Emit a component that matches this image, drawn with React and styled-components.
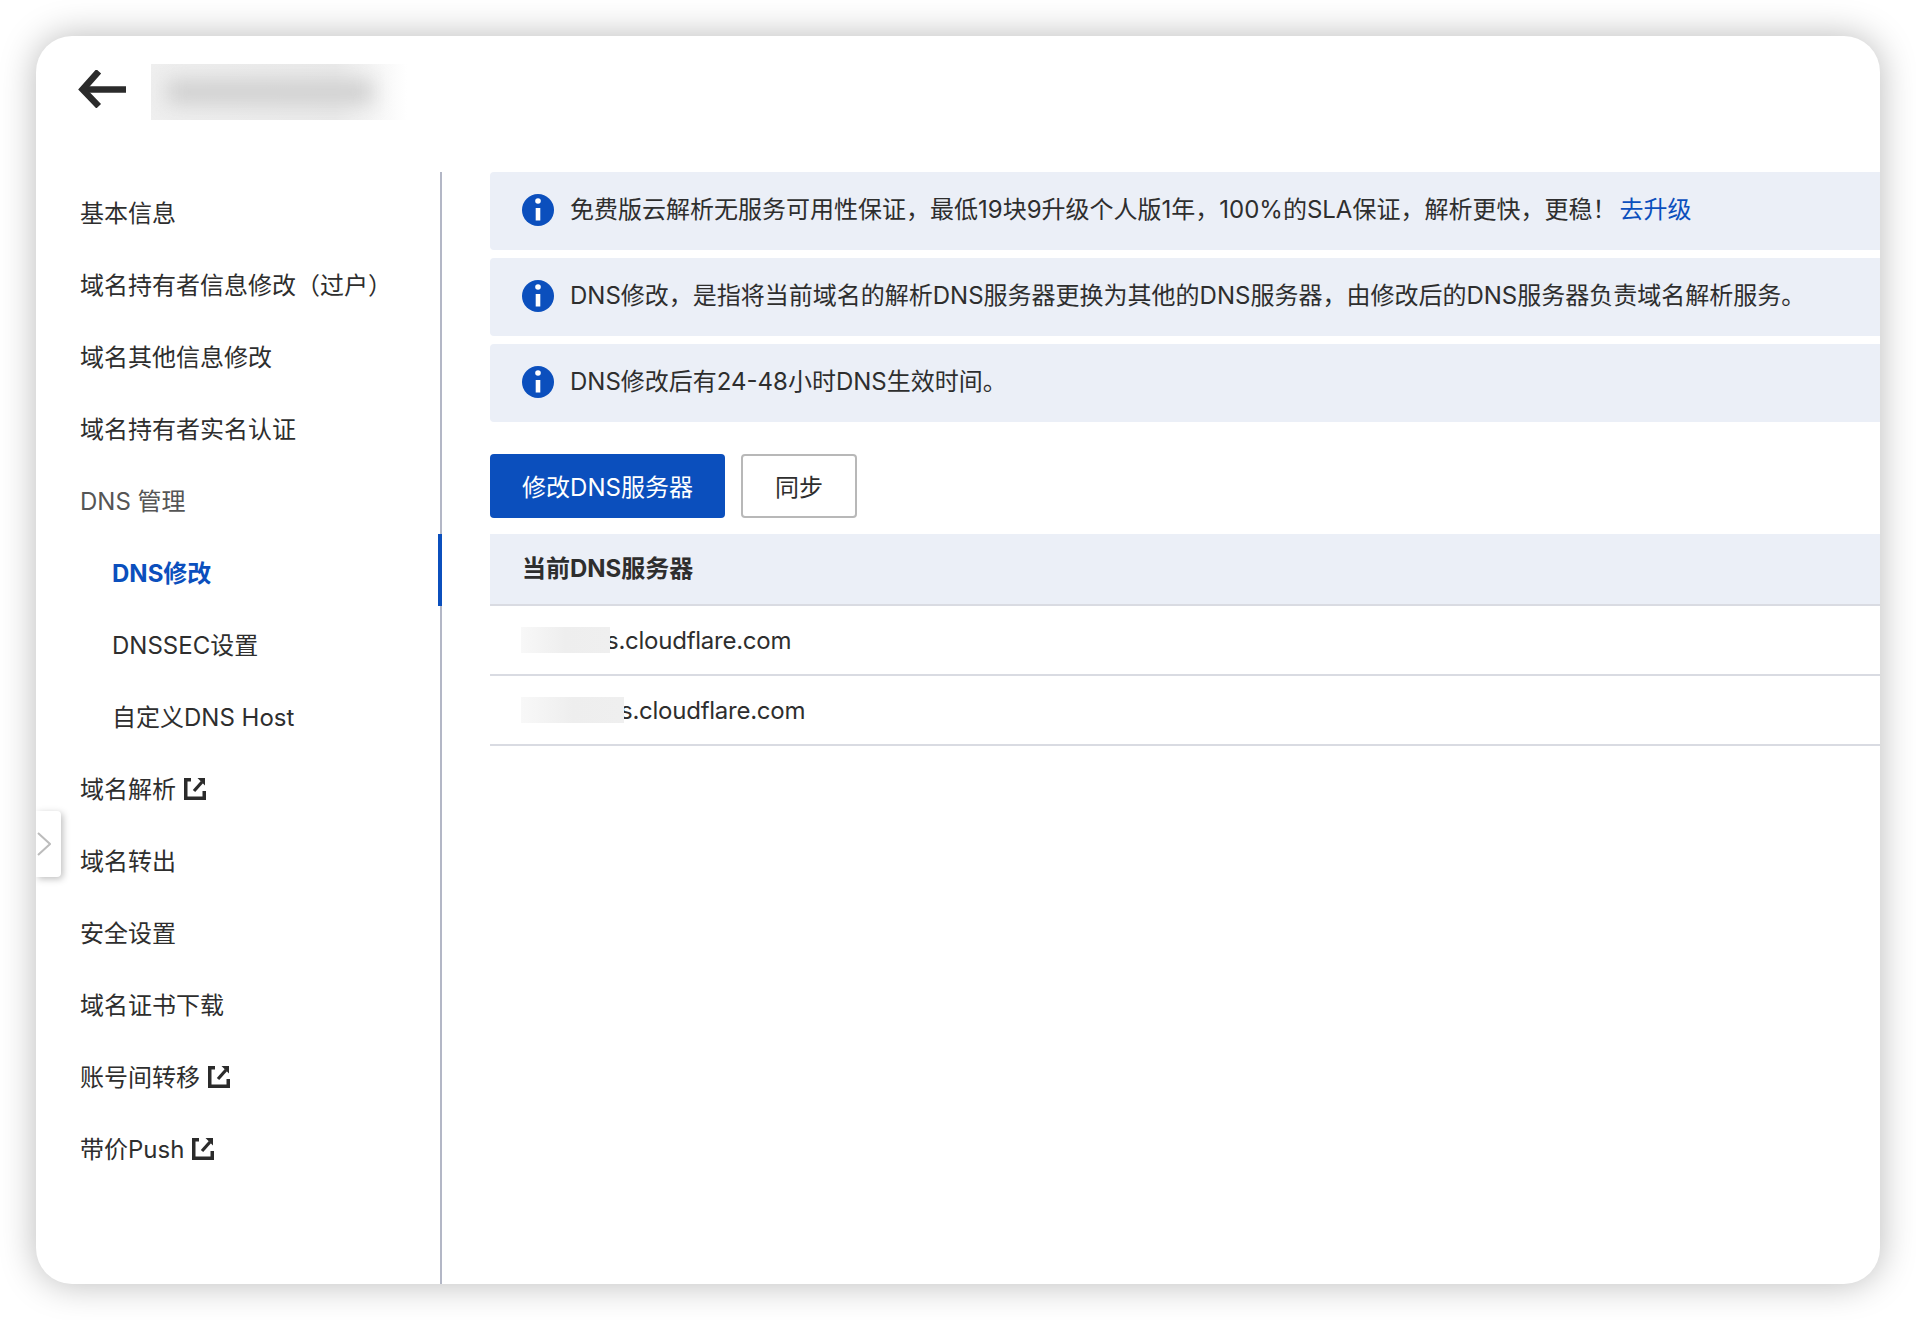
import styled, { createGlobalStyle } from "styled-components";

const GlobalStyle = createGlobalStyle`
    html, body {
        margin: 0;
        padding: 0;
        background: #fff;
    }
    body {
        font-family: Inter, "Noto Sans CJK SC", sans-serif;
        color: #2e2e2e;
    }
`;

const menu = [
    { label: "基本信息" },
    { label: "域名持有者信息修改（过户）" },
    { label: "域名其他信息修改" },
    { label: "域名持有者实名认证" },
    { label: "DNS 管理", muted: true },
    { label: "DNS修改", sub: true, active: true },
    { label: "DNSSEC设置", sub: true },
    { label: "自定义DNS Host", sub: true },
    { label: "域名解析", external: true },
    { label: "域名转出" },
    { label: "安全设置" },
    { label: "域名证书下载" },
    { label: "账号间转移", external: true },
    { label: "带价Push", external: true },
];

const ExternalIcon = () => (
    <ExternalSvg viewBox="0 0 22 22" fill="none" stroke="#2b2b2b">
        <path d="M7 1.75H1.75V20.25H20.25V13" strokeWidth="3.5" />
        <path d="M10 13L18 4" strokeWidth="3.2" />
        <path d="M13.5 0H21V7.5Z" fill="#2b2b2b" stroke="none" />
    </ExternalSvg>
);

const InfoIcon = () => (
    <InfoSvg viewBox="0 0 32 32">
        <circle cx="16" cy="16" r="16" fill="#0b4fbd" />
        <circle cx="16" cy="7" r="2.8" fill="#fff" />
        <rect x="13.7" y="14" width="4.6" height="12.5" fill="#fff" />
    </InfoSvg>
);

const App = () => {
    return (
        <>
            <GlobalStyle />
            <Card>
                <Header>
                    <BackArrow viewBox="0 0 48 38" fill="none" stroke="#2b2b2b" strokeWidth="6.5">
                        <path d="M48 19.5H5" />
                        <path d="M20.7 1.3L4.6 19.5L20.7 36.2" />
                    </BackArrow>
                    <TitleMask>
                        <TitleSmear />
                    </TitleMask>
                </Header>
                <Body>
                    <Sidebar>
                        {menu.map((item) => (
                            <MenuItem key={item.label} $sub={item.sub} $active={item.active} $muted={item.muted}>
                                {item.label}
                                {item.external && <ExternalIcon />}
                            </MenuItem>
                        ))}
                    </Sidebar>
                    <Main>
                        <Notice>
                            <InfoIcon />
                            <NoticeText>
                                免费版云解析无服务可用性保证，最低19块9升级个人版1年，100%的SLA保证，解析更快，更稳！
                                <UpgradeLink>去升级</UpgradeLink>
                            </NoticeText>
                        </Notice>
                        <Notice>
                            <InfoIcon />
                            <NoticeText>DNS修改，是指将当前域名的解析DNS服务器更换为其他的DNS服务器，由修改后的DNS服务器负责域名解析服务。</NoticeText>
                        </Notice>
                        <Notice>
                            <InfoIcon />
                            <NoticeText>DNS修改后有24-48小时DNS生效时间。</NoticeText>
                        </Notice>
                        <Actions>
                            <PrimaryButton>修改DNS服务器</PrimaryButton>
                            <PlainButton>同步</PlainButton>
                        </Actions>
                        <TableHead>当前DNS服务器</TableHead>
                        <TableRow>
                            <HostText $inset={84}>s.cloudflare.com</HostText>
                            <HostMask $width={89} />
                        </TableRow>
                        <TableRow>
                            <HostText $inset={98}>s.cloudflare.com</HostText>
                            <HostMask $width={103} />
                        </TableRow>
                    </Main>
                </Body>
                <CollapseHandle>
                    <svg width="14" height="24" viewBox="0 0 14 24" fill="none" stroke="#bcbcbc" strokeWidth="2">
                        <path d="M1 1L13 12L1 23" />
                    </svg>
                </CollapseHandle>
            </Card>
        </>
    );
};

export default App;

const Card = styled.div`
    position: relative;
    width: 1844px;
    height: 1248px;
    margin: 36px;
    background: #fff;
    border-radius: 36px;
    box-shadow: 0 0 36px rgba(0, 0, 0, 0.28);
    display: flex;
    flex-direction: column;
    overflow: hidden;
`;

const Header = styled.div`
    height: 136px;
    flex-shrink: 0;
    display: flex;
    align-items: flex-start;
    padding-left: 42px;
    box-sizing: border-box;
`;

const BackArrow = styled.svg`
    width: 48px;
    height: 38px;
    margin-top: 34px;
`;

const TitleMask = styled.div`
    width: 256px;
    height: 56px;
    margin: 28px 0 0 25px;
    background: linear-gradient(90deg, #efefef 0%, #eaeaea 72%, #ffffff 100%);
    overflow: hidden;
`;

const TitleSmear = styled.div`
    width: 206px;
    height: 24px;
    margin: 16px 0 0 16px;
    background: #cfcfcf;
    filter: blur(10px);
`;

const Body = styled.div`
    flex: 1;
    display: flex;
    min-height: 0;
`;

const Sidebar = styled.div`
    width: 406px;
    flex-shrink: 0;
    box-sizing: border-box;
    border-right: 2px solid #b3b7c6;
    padding-top: 2px;
`;

const MenuItem = styled.div`
    height: 72px;
    padding: 2px 0 0 ${(p) => (p.$sub ? "76px" : "44px")};
    box-sizing: border-box;
    display: flex;
    align-items: center;
    font-size: 24px;
    color: ${(p) => (p.$active ? "#0b4fbd" : p.$muted ? "#555" : "#2e2e2e")};
    font-weight: ${(p) => (p.$active ? 700 : 400)};
    border-right: ${(p) => (p.$active ? "4px solid #0b4fbd" : "none")};
    margin-right: -2px;
`;

const ExternalSvg = styled.svg`
    width: 22px;
    height: 22px;
    margin: 4px 0 0 8px;
`;

const Main = styled.div`
    flex: 1;
    min-width: 0;
    padding-left: 48px;
`;

const Notice = styled.div`
    height: 78px;
    margin-bottom: 8px;
    padding-left: 32px;
    display: flex;
    align-items: center;
    gap: 16px;
    background: #ebeff7;
    border-radius: 4px 0 0 4px;
    font-size: 24px;
    color: #2e2e2e;
`;

const NoticeText = styled.span`
    padding-bottom: 8px;
`;

const InfoSvg = styled.svg`
    width: 32px;
    height: 32px;
    flex-shrink: 0;
    margin-bottom: 2px;
`;

const UpgradeLink = styled.a`
    margin-left: 3px;
    color: #0b4fbd;
`;

const Actions = styled.div`
    display: flex;
    gap: 16px;
    margin: 32px 0 16px;
`;

const PrimaryButton = styled.button`
    height: 64px;
    width: 235px;
    padding: 0 0 2px;
    border: none;
    border-radius: 4px;
    background: #0b4fbd;
    color: #fff;
    font: inherit;
    font-size: 24px;
`;

const PlainButton = styled.button`
    height: 64px;
    width: 116px;
    padding: 0 0 2px;
    border: 2px solid #b8b8b8;
    border-radius: 4px;
    background: #fff;
    color: #2e2e2e;
    font: inherit;
    font-size: 24px;
`;

const TableHead = styled.div`
    height: 72px;
    box-sizing: border-box;
    padding: 0 0 6px 32px;
    display: flex;
    align-items: center;
    background: #ebeff7;
    border-bottom: 2px solid #d9dbe2;
    font-size: 24px;
    font-weight: 700;
`;

const TableRow = styled.div`
    position: relative;
    height: 70px;
    box-sizing: border-box;
    padding-left: 32px;
    display: flex;
    align-items: center;
    border-bottom: 2px solid #d9dbe2;
    font-size: 24px;
`;

const HostText = styled.span`
    padding-left: ${(p) => p.$inset}px;
    letter-spacing: -0.25px;
`;

const HostMask = styled.div`
    position: absolute;
    left: 31px;
    top: 21px;
    width: ${(p) => p.$width}px;
    height: 26px;
    background: linear-gradient(90deg, #f8f8f8 0%, #eeeeee 50%, #efefef 100%);
`;

const CollapseHandle = styled.div`
    position: absolute;
    left: 0;
    top: 775px;
    width: 25px;
    height: 66px;
    box-sizing: border-box;
    padding-left: 1px;
    display: flex;
    align-items: center;
    background: #fff;
    border-radius: 0 4px 4px 0;
    box-shadow: 2px 2px 7px rgba(0, 0, 0, 0.26);
`;
